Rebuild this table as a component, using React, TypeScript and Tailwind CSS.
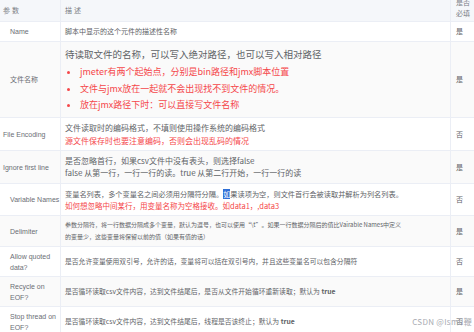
const font = "font-['Noto_Sans_CJK_SC','Noto_Sans',sans-serif]";
const labelFont = "font-['Liberation_Sans','Noto_Sans_CJK_SC',sans-serif]";

type Row = {
  label: React.ReactNode;
  labelPad?: string;
  height: string;
  striped?: boolean;
  body: React.ReactNode;
  must: string;
};

const red = "text-[#f5474a]";

const rows: Row[] = [
  {
    label: "Name",
    height: "h-[20px]",
    body: <p className="text-[7px]">脚本中显示的这个元件的描述性名称</p>,
    must: "是",
  },
  {
    label: "文件名称",
    height: "h-[76px]",
    striped: true,
    body: (
      <div className="flex flex-col gap-[4px]">
        <p className="text-[9.5px]">待读取文件的名称，可以写入绝对路径，也可以写入相对路径</p>
        <ul className={`list-disc pl-[15px] flex flex-col gap-[3px] text-[9px] ${red}`}>
          <li>jmeter有两个起始点，分别是bin路径和jmx脚本位置</li>
          <li>文件与jmx放在一起就不会出现找不到文件的情况。</li>
          <li>放在jmx路径下时：可以直接写文件名称</li>
        </ul>
      </div>
    ),
    must: "是",
  },
  {
    label: "File Encoding",
    labelPad: "pl-[3px]",
    height: "h-[33px]",
    body: (
      <div className="text-[8px] leading-[13px]">
        <p>文件读取时的编码格式，不填则使用操作系统的编码格式</p>
        <p className={red}>源文件保存时也要注意编码，否则会出现乱码的情况</p>
      </div>
    ),
    must: "否",
  },
  {
    label: "Ignore first line",
    labelPad: "pl-[3px]",
    height: "h-[33px]",
    striped: true,
    body: (
      <div className="text-[8px] leading-[12px]">
        <p>是否忽略首行，如果csv文件中没有表头，则选择false</p>
        <p>false 从第一行，一行一行的读。true 从第二行开始，一行一行的读</p>
      </div>
    ),
    must: "是",
  },
  {
    label: "Variable Names",
    height: "h-[32px]",
    body: (
      <div className="text-[7.2px] leading-[12px]">
        <p>
          变量名列表，多个变量名之间必须用分隔符分隔。
          <span className="bg-[#2f6fd6] text-white">如</span>
          果读项为空，则文件首行会被读取并解析为列名列表。
        </p>
        <p className={`text-[7.5px] ${red}`}>如何想忽略中间某行，用变量名称为空格接收。如data1，,data3</p>
      </div>
    ),
    must: "否",
  },
  {
    label: "Delimiter",
    height: "h-[31px]",
    striped: true,
    body: (
      <div className="text-[6px] leading-[12px]">
        <p>参数分隔符，将一行数据分隔成多个变量，默认为逗号，也可以使用“\t”。如果一行数据分隔后的值比Vairable Names中定义</p>
        <p>的变量少，这些变量将保留以前的值（如果有值的话）</p>
      </div>
    ),
    must: "是",
  },
  {
    label: (
      <>
        Allow quoted
        <br />
        data?
      </>
    ),
    height: "h-[30px]",
    body: <p className="text-[6.8px]">是否允许变量使用双引号，允许的话，变量将可以括在双引号内，并且这些变量名可以包含分隔符</p>,
    must: "否",
  },
  {
    label: (
      <>
        Recycle on
        <br />
        EOF?
      </>
    ),
    height: "h-[30px]",
    striped: true,
    body: (
      <p className="text-[6.8px]">
        是否循环读取csv文件内容，达到文件结尾后，是否从文件开始循环重新读取；默认为 <b>true</b>
      </p>
    ),
    must: "是",
  },
  {
    label: (
      <>
        Stop thread on
        <br />
        EOF?
      </>
    ),
    height: "h-[30px]",
    body: (
      <p className="text-[6.8px]">
        是否循环读取csv文件内容，达到文件结尾后，线程是否该终止；默认为 <b>true</b>
      </p>
    ),
    must: "否",
  },
];

export default function App() {
  return (
    <div className={`relative w-[474px] h-[332px] overflow-hidden bg-white text-[#606266] ${font}`}>
      {/* header */}
      <div className="grid grid-cols-[61px_390px_1fr] h-[22px] bg-[#f5f7fa] border-b border-[#ebeef5] text-[7px] text-[#7a7d84]">
        <div className="flex items-center pl-[3px] tracking-[2px] border-r border-[#ebeef5]">参数</div>
        <div className="flex items-center pl-[4px] tracking-[2px] border-r border-[#ebeef5]">描述</div>
        <div className="flex flex-col justify-center pl-[5px] leading-[11px] -mt-[6px]">
          <span>是否</span>
          <span>必填</span>
        </div>
      </div>

      {rows.map((r, i) => (
        <div
          key={i}
          className={`grid grid-cols-[61px_390px_1fr] ${r.height} border-b border-[#ebeef5] ${r.striped ? "bg-[#fafafa]" : "bg-white"}`}
        >
          <div className={`flex items-center ${r.labelPad ?? "pl-[10px]"} ${labelFont} text-[7px] leading-[11px] whitespace-nowrap overflow-hidden border-r border-[#ebeef5] text-[#6b6e75]`}>
            <div>{r.label}</div>
          </div>
          <div className="flex items-center pl-[4px] border-r border-[#ebeef5] whitespace-nowrap overflow-hidden">
            {r.body}
          </div>
          <div className="flex items-center pl-[5px] text-[7px]">{r.must}</div>
        </div>
      ))}

      {/* watermark */}
      <div className="absolute right-[2px] bottom-[4px] text-[8px] text-[#a8abb2] tracking-[0.3px]">
        CSDN @Ismil鞭
      </div>
    </div>
  );
}
